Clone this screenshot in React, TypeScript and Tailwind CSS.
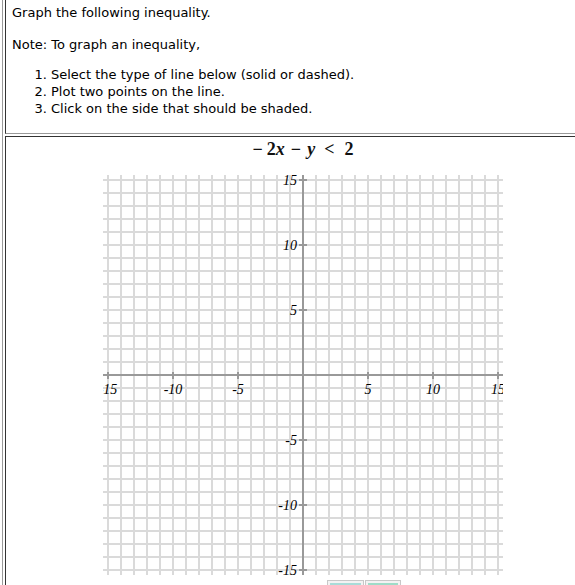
import React from "react";

const UNIT = 13;
const SIZE = 400;
const O = 200;
const range = Array.from({ length: 31 }, (_, i) => i - 15);
const labeled = [-15, -10, -5, 5, 10, 15];

function Graph() {
  return (
    <svg width={SIZE} height={SIZE} viewBox={`0 0 ${SIZE} ${SIZE}`} className="block overflow-hidden">
      {/* grid */}
      {range.map((i) => (
        <g key={i}>
          <line x1={O + i * UNIT} y1={0} x2={O + i * UNIT} y2={SIZE} stroke="#dadada" strokeWidth={2} />
          <line x1={0} y1={O + i * UNIT} x2={SIZE} y2={O + i * UNIT} stroke="#dadada" strokeWidth={2} />
        </g>
      ))}
      {/* axes */}
      <line x1={0} y1={O} x2={SIZE} y2={O} stroke="#999" strokeWidth={2} />
      <line x1={O} y1={0} x2={O} y2={SIZE} stroke="#999" strokeWidth={2} />
      {labeled.map((v) => (
        <g key={v}>
          <line x1={O + v * UNIT} y1={O - 3} x2={O + v * UNIT} y2={O + 4} stroke="#999" strokeWidth={2} />
          <line x1={O - 4} y1={O - v * UNIT} x2={O + 4} y2={O - v * UNIT} stroke="#999" strokeWidth={2} />
          <text
            x={O + v * UNIT}
            y={O + 19}
            textAnchor="middle"
            fontFamily="'Liberation Serif', serif"
            fontStyle="italic"
            fontSize={14}
            fill="#000"
          >
            {v < 0 ? `-${-v}` : v}
          </text>
          <text
            x={O - 6}
            y={O - v * UNIT + 5}
            textAnchor="end"
            fontFamily="'Liberation Serif', serif"
            fontStyle="italic"
            fontSize={14}
            fill="#000"
          >
            {v < 0 ? `-${-v}` : v}
          </text>
        </g>
      ))}
    </svg>
  );
}

export default function App() {
  return (
    <div className="w-[575px] h-[585px] overflow-hidden bg-white">
      <div
        className="ml-[2px] w-[602px] border-l border-r border-[#9a9a9a] px-[2px] pb-[2px] flex flex-col gap-[2px] text-black"
        style={{ fontFamily: "'DejaVu Sans', sans-serif" }}
      >
        {/* Instructions */}
        <div className="border-l border-l-[#333] border-r border-r-[#aaa] border-b border-b-[#999] pl-[6px] pt-[4px] pb-[16px] text-[13px] leading-[17px]">
          <p>Graph the following inequality.</p>
          <p className="mt-[15px]">Note: To graph an inequality,</p>
          <ol className="list-decimal pl-[39px] mt-[13px]">
            <li>Select the type of line below (solid or dashed).</li>
            <li>Plot two points on the line.</li>
            <li>Click on the side that should be shaded.</li>
          </ol>
        </div>

        {/* Graph cell */}
        <div className="border-l border-t border-l-[#333] border-t-[#333] border-r border-r-[#aaa] flex flex-col items-center">
          <div
            className="h-[24px] flex items-center text-[18px] text-[#111]"
            style={{ fontFamily: "'Liberation Serif', serif" }}
          >
            <span className="font-bold">−</span>
            <span className="ml-[4px] font-bold">2</span>
            <i className="font-bold">x</i>
            <span className="ml-[6px] font-bold">−</span>
            <i className="ml-[6px] font-bold">y</i>
            <span className="ml-[9px] font-bold">&lt;</span>
            <span className="ml-[10px] font-bold">2</span>
          </div>
          <div className="mt-[14px]">
            <Graph />
          </div>
          <div className="mt-[5px] ml-[122px] flex gap-[1px]">
            <div className="w-[37px] h-[20px] border border-[#c8c8c8] bg-[#f3f3f3] p-[2px]">
              <div className="h-full bg-[#a9dcd8]" />
            </div>
            <div className="w-[36px] h-[20px] border border-[#c8c8c8] bg-[#f3f3f3] p-[2px]">
              <div className="h-full bg-[#9fdcc8]" />
            </div>
          </div>
        </div>
      </div>
    </div>
  );
}
